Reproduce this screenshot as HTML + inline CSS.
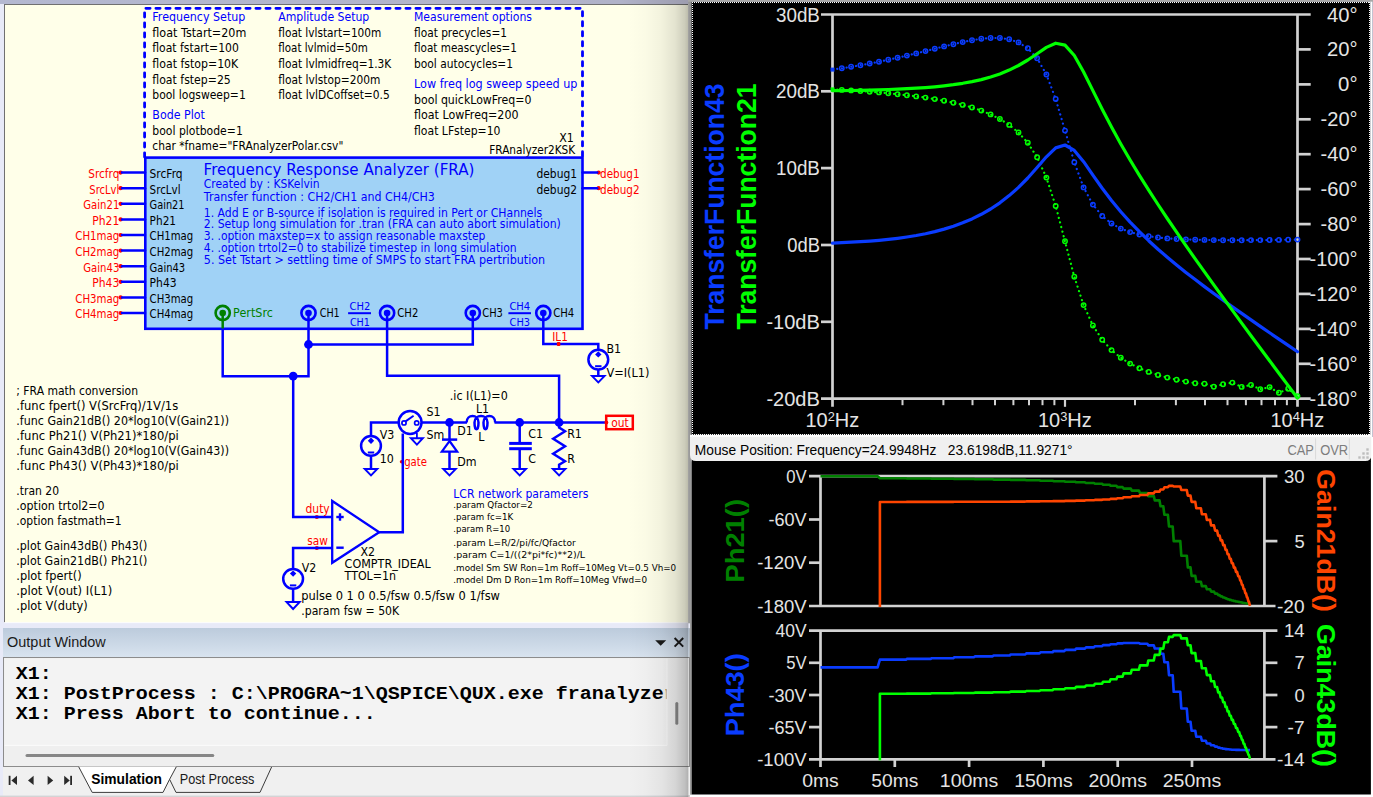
<!DOCTYPE html>
<html lang="en"><head><meta charset="utf-8"><title>QSPICE - Frequency Response Analyzer</title>
<style>
html,body{margin:0;padding:0;background:#e8eaf8;overflow:hidden}
svg{display:block}
text{white-space:pre}
</style></head><body>
<svg width="1373" height="797" viewBox="0 0 1373 797">
<defs>
<linearGradient id="hdr" x1="0" y1="0" x2="0" y2="1"><stop offset="0" stop-color="#bccbdc"/><stop offset="1" stop-color="#d8e3ef"/></linearGradient>
<linearGradient id="shadow" x1="0" y1="0" x2="1" y2="0">
<stop offset="0" stop-color="#000" stop-opacity="0"/>
<stop offset="0.3" stop-color="#000" stop-opacity="0.018"/>
<stop offset="0.55" stop-color="#000" stop-opacity="0.05"/>
<stop offset="0.78" stop-color="#000" stop-opacity="0.11"/>
<stop offset="0.94" stop-color="#000" stop-opacity="0.2"/>
<stop offset="1" stop-color="#000" stop-opacity="0.27"/></linearGradient>
<linearGradient id="topbar" x1="0" y1="0" x2="1" y2="0"><stop offset="0" stop-color="#b4b8d0"/><stop offset="0.9" stop-color="#b0b2c8"/><stop offset="1" stop-color="#9c9cae"/></linearGradient>
</defs>
<rect x="0.0" y="0.0" width="1373.0" height="797.0" fill="#e8eaf8" />
<rect x="0.0" y="0.0" width="690.0" height="4.0" fill="url(#topbar)" />
<rect x="4.0" y="4.0" width="684.5" height="618.5" fill="#ffffe9" />
<line x1="4.5" y1="4.0" x2="4.5" y2="622.5" stroke="#707070" stroke-width="1" />
<line x1="4.0" y1="4.5" x2="688.0" y2="4.5" stroke="#707070" stroke-width="1" />
<rect x="4.0" y="622.3" width="685.0" height="1.0" fill="#ffffff" />
<path d="M144.6 157 V8.3 H582.5 V157" stroke="#0000ff" stroke-width="2.8" fill="none" stroke-dasharray="4.2 5.8" stroke-linecap="round"/>
<text x="152.3" y="21.0" font-size="11.7" fill="#0000ff" font-family="'DejaVu Sans','Liberation Sans',sans-serif" textLength="93.0" lengthAdjust="spacingAndGlyphs">Frequency Setup</text>
<text x="152.3" y="37.0" font-size="11.7" fill="#000" font-family="'DejaVu Sans','Liberation Sans',sans-serif" textLength="94.0" lengthAdjust="spacingAndGlyphs">float Tstart=20m</text>
<text x="152.3" y="52.4" font-size="11.7" fill="#000" font-family="'DejaVu Sans','Liberation Sans',sans-serif" textLength="86.5" lengthAdjust="spacingAndGlyphs">float fstart=100</text>
<text x="152.3" y="68.3" font-size="11.7" fill="#000" font-family="'DejaVu Sans','Liberation Sans',sans-serif" textLength="86.0" lengthAdjust="spacingAndGlyphs">float fstop=10K</text>
<text x="152.3" y="84.0" font-size="11.7" fill="#000" font-family="'DejaVu Sans','Liberation Sans',sans-serif" textLength="78.5" lengthAdjust="spacingAndGlyphs">float fstep=25</text>
<text x="152.3" y="99.3" font-size="11.7" fill="#000" font-family="'DejaVu Sans','Liberation Sans',sans-serif" textLength="93.5" lengthAdjust="spacingAndGlyphs">bool logsweep=1</text>
<text x="152.3" y="119.0" font-size="11.7" fill="#0000ff" font-family="'DejaVu Sans','Liberation Sans',sans-serif" textLength="52.5" lengthAdjust="spacingAndGlyphs">Bode Plot</text>
<text x="152.3" y="135.1" font-size="11.7" fill="#000" font-family="'DejaVu Sans','Liberation Sans',sans-serif" textLength="90.5" lengthAdjust="spacingAndGlyphs">bool plotbode=1</text>
<text x="152.3" y="150.3" font-size="11.7" fill="#000" font-family="'DejaVu Sans','Liberation Sans',sans-serif" textLength="191.0" lengthAdjust="spacingAndGlyphs">char *fname="FRAnalyzerPolar.csv"</text>
<text x="278.3" y="21.0" font-size="11.7" fill="#0000ff" font-family="'DejaVu Sans','Liberation Sans',sans-serif" textLength="91.0" lengthAdjust="spacingAndGlyphs">Amplitude Setup</text>
<text x="278.3" y="37.0" font-size="11.7" fill="#000" font-family="'DejaVu Sans','Liberation Sans',sans-serif" textLength="103.0" lengthAdjust="spacingAndGlyphs">float lvlstart=100m</text>
<text x="278.3" y="52.4" font-size="11.7" fill="#000" font-family="'DejaVu Sans','Liberation Sans',sans-serif" textLength="89.5" lengthAdjust="spacingAndGlyphs">float lvlmid=50m</text>
<text x="278.3" y="68.3" font-size="11.7" fill="#000" font-family="'DejaVu Sans','Liberation Sans',sans-serif" textLength="113.0" lengthAdjust="spacingAndGlyphs">float lvlmidfreq=1.3K</text>
<text x="278.3" y="84.0" font-size="11.7" fill="#000" font-family="'DejaVu Sans','Liberation Sans',sans-serif" textLength="102.0" lengthAdjust="spacingAndGlyphs">float lvlstop=200m</text>
<text x="278.3" y="99.3" font-size="11.7" fill="#000" font-family="'DejaVu Sans','Liberation Sans',sans-serif" textLength="111.5" lengthAdjust="spacingAndGlyphs">float lvlDCoffset=0.5</text>
<text x="414.0" y="21.0" font-size="11.7" fill="#0000ff" font-family="'DejaVu Sans','Liberation Sans',sans-serif" textLength="118.0" lengthAdjust="spacingAndGlyphs">Measurement options</text>
<text x="414.0" y="37.0" font-size="11.7" fill="#000" font-family="'DejaVu Sans','Liberation Sans',sans-serif" textLength="93.0" lengthAdjust="spacingAndGlyphs">float precycles=1</text>
<text x="414.0" y="52.4" font-size="11.7" fill="#000" font-family="'DejaVu Sans','Liberation Sans',sans-serif" textLength="103.0" lengthAdjust="spacingAndGlyphs">float meascycles=1</text>
<text x="414.0" y="68.3" font-size="11.7" fill="#000" font-family="'DejaVu Sans','Liberation Sans',sans-serif" textLength="99.0" lengthAdjust="spacingAndGlyphs">bool autocycles=1</text>
<text x="414.0" y="88.0" font-size="11.7" fill="#0000ff" font-family="'DejaVu Sans','Liberation Sans',sans-serif" textLength="163.5" lengthAdjust="spacingAndGlyphs">Low freq log sweep speed up</text>
<text x="414.0" y="103.6" font-size="11.7" fill="#000" font-family="'DejaVu Sans','Liberation Sans',sans-serif" textLength="117.5" lengthAdjust="spacingAndGlyphs">bool quickLowFreq=0</text>
<text x="414.0" y="119.0" font-size="11.7" fill="#000" font-family="'DejaVu Sans','Liberation Sans',sans-serif" textLength="104.5" lengthAdjust="spacingAndGlyphs">float LowFreq=200</text>
<text x="414.0" y="135.1" font-size="11.7" fill="#000" font-family="'DejaVu Sans','Liberation Sans',sans-serif" textLength="86.5" lengthAdjust="spacingAndGlyphs">float LFstep=10</text>
<text x="573.8" y="142.4" font-size="11.7" fill="#000" font-family="'DejaVu Sans','Liberation Sans',sans-serif" text-anchor="end" textLength="14.6" lengthAdjust="spacingAndGlyphs">X1</text>
<text x="575.2" y="153.6" font-size="11.7" fill="#000" font-family="'DejaVu Sans','Liberation Sans',sans-serif" text-anchor="end" textLength="86.0" lengthAdjust="spacingAndGlyphs">FRAnalyzer2KSK</text>
<rect x="145.3" y="157.6" width="437.2" height="171.2" fill="#a0d2f6" stroke="#0000ff" stroke-width="2.6"/>
<circle cx="120.6" cy="172.6" r="2.1" fill="#ff0000" stroke="none" stroke-width="0"/>
<line x1="122.0" y1="172.6" x2="145.0" y2="172.6" stroke="#0000ff" stroke-width="2.5" stroke-linecap="round"/>
<text x="119.3" y="177.9" font-size="11.7" fill="#ff0000" font-family="'DejaVu Sans','Liberation Sans',sans-serif" text-anchor="end" textLength="31.0" lengthAdjust="spacingAndGlyphs">Srcfrq</text>
<text x="149.6" y="177.9" font-size="11.7" fill="#000" font-family="'DejaVu Sans','Liberation Sans',sans-serif" textLength="33.0" lengthAdjust="spacingAndGlyphs">SrcFrq</text>
<circle cx="120.6" cy="188.2" r="2.1" fill="#ff0000" stroke="none" stroke-width="0"/>
<line x1="122.0" y1="188.2" x2="145.0" y2="188.2" stroke="#0000ff" stroke-width="2.5" stroke-linecap="round"/>
<text x="119.3" y="193.5" font-size="11.7" fill="#ff0000" font-family="'DejaVu Sans','Liberation Sans',sans-serif" text-anchor="end" textLength="30.0" lengthAdjust="spacingAndGlyphs">SrcLvl</text>
<text x="149.6" y="193.5" font-size="11.7" fill="#000" font-family="'DejaVu Sans','Liberation Sans',sans-serif" textLength="31.0" lengthAdjust="spacingAndGlyphs">SrcLvl</text>
<circle cx="120.6" cy="203.8" r="2.1" fill="#ff0000" stroke="none" stroke-width="0"/>
<line x1="122.0" y1="203.8" x2="145.0" y2="203.8" stroke="#0000ff" stroke-width="2.5" stroke-linecap="round"/>
<text x="119.3" y="209.1" font-size="11.7" fill="#ff0000" font-family="'DejaVu Sans','Liberation Sans',sans-serif" text-anchor="end" textLength="36.0" lengthAdjust="spacingAndGlyphs">Gain21</text>
<text x="149.6" y="209.1" font-size="11.7" fill="#000" font-family="'DejaVu Sans','Liberation Sans',sans-serif" textLength="35.0" lengthAdjust="spacingAndGlyphs">Gain21</text>
<circle cx="120.6" cy="219.4" r="2.1" fill="#ff0000" stroke="none" stroke-width="0"/>
<line x1="122.0" y1="219.4" x2="145.0" y2="219.4" stroke="#0000ff" stroke-width="2.5" stroke-linecap="round"/>
<text x="119.3" y="224.7" font-size="11.7" fill="#ff0000" font-family="'DejaVu Sans','Liberation Sans',sans-serif" text-anchor="end" textLength="27.0" lengthAdjust="spacingAndGlyphs">Ph21</text>
<text x="149.6" y="224.7" font-size="11.7" fill="#000" font-family="'DejaVu Sans','Liberation Sans',sans-serif" textLength="26.5" lengthAdjust="spacingAndGlyphs">Ph21</text>
<circle cx="120.6" cy="235.0" r="2.1" fill="#ff0000" stroke="none" stroke-width="0"/>
<line x1="122.0" y1="235.0" x2="145.0" y2="235.0" stroke="#0000ff" stroke-width="2.5" stroke-linecap="round"/>
<text x="119.3" y="240.3" font-size="11.7" fill="#ff0000" font-family="'DejaVu Sans','Liberation Sans',sans-serif" text-anchor="end" textLength="44.0" lengthAdjust="spacingAndGlyphs">CH1mag</text>
<text x="149.6" y="240.3" font-size="11.7" fill="#000" font-family="'DejaVu Sans','Liberation Sans',sans-serif" textLength="43.6" lengthAdjust="spacingAndGlyphs">CH1mag</text>
<circle cx="120.6" cy="250.6" r="2.1" fill="#ff0000" stroke="none" stroke-width="0"/>
<line x1="122.0" y1="250.6" x2="145.0" y2="250.6" stroke="#0000ff" stroke-width="2.5" stroke-linecap="round"/>
<text x="119.3" y="255.9" font-size="11.7" fill="#ff0000" font-family="'DejaVu Sans','Liberation Sans',sans-serif" text-anchor="end" textLength="44.0" lengthAdjust="spacingAndGlyphs">CH2mag</text>
<text x="149.6" y="255.9" font-size="11.7" fill="#000" font-family="'DejaVu Sans','Liberation Sans',sans-serif" textLength="43.6" lengthAdjust="spacingAndGlyphs">CH2mag</text>
<circle cx="120.6" cy="266.2" r="2.1" fill="#ff0000" stroke="none" stroke-width="0"/>
<line x1="122.0" y1="266.2" x2="145.0" y2="266.2" stroke="#0000ff" stroke-width="2.5" stroke-linecap="round"/>
<text x="119.3" y="271.5" font-size="11.7" fill="#ff0000" font-family="'DejaVu Sans','Liberation Sans',sans-serif" text-anchor="end" textLength="36.0" lengthAdjust="spacingAndGlyphs">Gain43</text>
<text x="149.6" y="271.5" font-size="11.7" fill="#000" font-family="'DejaVu Sans','Liberation Sans',sans-serif" textLength="35.5" lengthAdjust="spacingAndGlyphs">Gain43</text>
<circle cx="120.6" cy="281.8" r="2.1" fill="#ff0000" stroke="none" stroke-width="0"/>
<line x1="122.0" y1="281.8" x2="145.0" y2="281.8" stroke="#0000ff" stroke-width="2.5" stroke-linecap="round"/>
<text x="119.3" y="287.1" font-size="11.7" fill="#ff0000" font-family="'DejaVu Sans','Liberation Sans',sans-serif" text-anchor="end" textLength="27.0" lengthAdjust="spacingAndGlyphs">Ph43</text>
<text x="149.6" y="287.1" font-size="11.7" fill="#000" font-family="'DejaVu Sans','Liberation Sans',sans-serif" textLength="27.0" lengthAdjust="spacingAndGlyphs">Ph43</text>
<circle cx="120.6" cy="297.4" r="2.1" fill="#ff0000" stroke="none" stroke-width="0"/>
<line x1="122.0" y1="297.4" x2="145.0" y2="297.4" stroke="#0000ff" stroke-width="2.5" stroke-linecap="round"/>
<text x="119.3" y="302.7" font-size="11.7" fill="#ff0000" font-family="'DejaVu Sans','Liberation Sans',sans-serif" text-anchor="end" textLength="44.0" lengthAdjust="spacingAndGlyphs">CH3mag</text>
<text x="149.6" y="302.7" font-size="11.7" fill="#000" font-family="'DejaVu Sans','Liberation Sans',sans-serif" textLength="43.6" lengthAdjust="spacingAndGlyphs">CH3mag</text>
<circle cx="120.6" cy="313.0" r="2.1" fill="#ff0000" stroke="none" stroke-width="0"/>
<line x1="122.0" y1="313.0" x2="145.0" y2="313.0" stroke="#0000ff" stroke-width="2.5" stroke-linecap="round"/>
<text x="119.3" y="318.3" font-size="11.7" fill="#ff0000" font-family="'DejaVu Sans','Liberation Sans',sans-serif" text-anchor="end" textLength="44.0" lengthAdjust="spacingAndGlyphs">CH4mag</text>
<text x="149.6" y="318.3" font-size="11.7" fill="#000" font-family="'DejaVu Sans','Liberation Sans',sans-serif" textLength="43.6" lengthAdjust="spacingAndGlyphs">CH4mag</text>
<circle cx="598.6" cy="172.6" r="2.1" fill="#ff0000" stroke="none" stroke-width="0"/>
<line x1="582.5" y1="172.6" x2="597.2" y2="172.6" stroke="#0000ff" stroke-width="2.5" stroke-linecap="round"/>
<text x="577.0" y="178.1" font-size="11.7" fill="#000" font-family="'DejaVu Sans','Liberation Sans',sans-serif" text-anchor="end" textLength="40.5" lengthAdjust="spacingAndGlyphs">debug1</text>
<text x="600.0" y="178.1" font-size="11.7" fill="#ff0000" font-family="'DejaVu Sans','Liberation Sans',sans-serif" textLength="39.6" lengthAdjust="spacingAndGlyphs">debug1</text>
<circle cx="598.6" cy="188.2" r="2.1" fill="#ff0000" stroke="none" stroke-width="0"/>
<line x1="582.5" y1="188.2" x2="597.2" y2="188.2" stroke="#0000ff" stroke-width="2.5" stroke-linecap="round"/>
<text x="577.0" y="193.7" font-size="11.7" fill="#000" font-family="'DejaVu Sans','Liberation Sans',sans-serif" text-anchor="end" textLength="40.5" lengthAdjust="spacingAndGlyphs">debug2</text>
<text x="600.0" y="193.7" font-size="11.7" fill="#ff0000" font-family="'DejaVu Sans','Liberation Sans',sans-serif" textLength="39.6" lengthAdjust="spacingAndGlyphs">debug2</text>
<text x="203.6" y="175.3" font-size="15.2" fill="#0000ff" font-family="'DejaVu Sans','Liberation Sans',sans-serif" textLength="270.8" lengthAdjust="spacingAndGlyphs">Frequency Response Analyzer (FRA)</text>
<text x="203.8" y="188.4" font-size="11.8" fill="#0000ff" font-family="'DejaVu Sans','Liberation Sans',sans-serif" textLength="115.8" lengthAdjust="spacingAndGlyphs">Created by : KSKelvin</text>
<text x="203.8" y="200.8" font-size="11.8" fill="#0000ff" font-family="'DejaVu Sans','Liberation Sans',sans-serif" textLength="230.9" lengthAdjust="spacingAndGlyphs">Transfer function : CH2/CH1 and CH4/CH3</text>
<text x="203.8" y="216.6" font-size="11.8" fill="#0000ff" font-family="'DejaVu Sans','Liberation Sans',sans-serif" textLength="338.4" lengthAdjust="spacingAndGlyphs">1. Add E or B-source if isolation is required in Pert or CHannels</text>
<text x="203.8" y="227.9" font-size="11.8" fill="#0000ff" font-family="'DejaVu Sans','Liberation Sans',sans-serif" textLength="357.0" lengthAdjust="spacingAndGlyphs">2. Setup long simulation for .tran (FRA can auto abort simulation)</text>
<text x="203.8" y="239.8" font-size="11.8" fill="#0000ff" font-family="'DejaVu Sans','Liberation Sans',sans-serif" textLength="281.6" lengthAdjust="spacingAndGlyphs">3. .option maxstep=x to assign reasonable maxstep</text>
<text x="203.8" y="251.6" font-size="11.8" fill="#0000ff" font-family="'DejaVu Sans','Liberation Sans',sans-serif" textLength="312.8" lengthAdjust="spacingAndGlyphs">4. .option trtol2=0 to stabilize timestep in long simulation</text>
<text x="203.8" y="263.5" font-size="11.8" fill="#0000ff" font-family="'DejaVu Sans','Liberation Sans',sans-serif" textLength="341.4" lengthAdjust="spacingAndGlyphs">5. Set Tstart &gt; settling time of SMPS to start FRA pertribution</text>
<circle cx="558.6" cy="344.0" r="2.1" fill="#ff0000" stroke="none" stroke-width="0"/>
<circle cx="316.8" cy="517.0" r="2.1" fill="#ff0000" stroke="none" stroke-width="0"/>
<circle cx="316.8" cy="548.0" r="2.1" fill="#ff0000" stroke="none" stroke-width="0"/>
<line x1="222.7" y1="313.0" x2="222.7" y2="328.8" stroke="#008000" stroke-width="2.5" />
<path d="M222.7 328.5 V376.2 H308.5 V313" stroke="#0000ff" stroke-width="2.5" fill="none" />
<path d="M308.5 344.5 H472.8 V313" stroke="#0000ff" stroke-width="2.5" fill="none" />
<path d="M387.1 313 V375.8 H559.1 V422" stroke="#0000ff" stroke-width="2.5" fill="none" />
<path d="M543.3 313 V344 H598.3 V349.5" stroke="#0000ff" stroke-width="2.5" fill="none" />
<path d="M293.2 376.2 V517 H332.2" stroke="#0000ff" stroke-width="2.5" fill="none" />
<circle cx="308.5" cy="344.5" r="4.4" fill="#0000ff" stroke="none" stroke-width="0"/>
<circle cx="293.2" cy="376.2" r="4.4" fill="#0000ff" stroke="none" stroke-width="0"/>
<circle cx="222.7" cy="313" r="7.1" fill="none" stroke="#008000" stroke-width="2.6"/>
<circle cx="222.7" cy="313.0" r="3.3" fill="#008000" stroke="none" stroke-width="0"/>
<circle cx="308.5" cy="313" r="7.1" fill="none" stroke="#0000ff" stroke-width="2.6"/>
<circle cx="308.5" cy="313.0" r="3.3" fill="#0000ff" stroke="none" stroke-width="0"/>
<circle cx="387.1" cy="313" r="7.1" fill="none" stroke="#0000ff" stroke-width="2.6"/>
<circle cx="387.1" cy="313.0" r="3.3" fill="#0000ff" stroke="none" stroke-width="0"/>
<circle cx="472.8" cy="313" r="7.1" fill="none" stroke="#0000ff" stroke-width="2.6"/>
<circle cx="472.8" cy="313.0" r="3.3" fill="#0000ff" stroke="none" stroke-width="0"/>
<circle cx="543.3" cy="313" r="7.1" fill="none" stroke="#0000ff" stroke-width="2.6"/>
<circle cx="543.3" cy="313.0" r="3.3" fill="#0000ff" stroke="none" stroke-width="0"/>
<text x="233.1" y="317.2" font-size="11.7" fill="#008000" font-family="'DejaVu Sans','Liberation Sans',sans-serif" textLength="39.8" lengthAdjust="spacingAndGlyphs">PertSrc</text>
<text x="319.7" y="317.2" font-size="11.7" fill="#000" font-family="'DejaVu Sans','Liberation Sans',sans-serif" textLength="20.0" lengthAdjust="spacingAndGlyphs">CH1</text>
<text x="397.3" y="317.2" font-size="11.7" fill="#000" font-family="'DejaVu Sans','Liberation Sans',sans-serif" textLength="21.0" lengthAdjust="spacingAndGlyphs">CH2</text>
<text x="482.3" y="317.2" font-size="11.7" fill="#000" font-family="'DejaVu Sans','Liberation Sans',sans-serif" textLength="20.6" lengthAdjust="spacingAndGlyphs">CH3</text>
<text x="553.2" y="317.2" font-size="11.7" fill="#000" font-family="'DejaVu Sans','Liberation Sans',sans-serif" textLength="21.0" lengthAdjust="spacingAndGlyphs">CH4</text>
<text x="359.9" y="309.6" font-size="10.6" fill="#0000ff" font-family="'DejaVu Sans','Liberation Sans',sans-serif" text-anchor="middle" textLength="20.8" lengthAdjust="spacingAndGlyphs">CH2</text>
<line x1="348.1" y1="313.2" x2="371.0" y2="313.2" stroke="#0000ff" stroke-width="2" />
<text x="359.9" y="325.7" font-size="10.6" fill="#0000ff" font-family="'DejaVu Sans','Liberation Sans',sans-serif" text-anchor="middle" textLength="20.0" lengthAdjust="spacingAndGlyphs">CH1</text>
<text x="519.8" y="309.6" font-size="10.6" fill="#0000ff" font-family="'DejaVu Sans','Liberation Sans',sans-serif" text-anchor="middle" textLength="20.8" lengthAdjust="spacingAndGlyphs">CH4</text>
<line x1="508.4" y1="313.2" x2="531.0" y2="313.2" stroke="#0000ff" stroke-width="2" />
<text x="519.8" y="325.7" font-size="10.6" fill="#0000ff" font-family="'DejaVu Sans','Liberation Sans',sans-serif" text-anchor="middle" textLength="20.5" lengthAdjust="spacingAndGlyphs">CH3</text>
<text x="552.3" y="341.0" font-size="11.7" fill="#ff0000" font-family="'DejaVu Sans','Liberation Sans',sans-serif" textLength="15.5" lengthAdjust="spacingAndGlyphs">IL1</text>
<circle cx="558.6" cy="344.0" r="1.9" fill="#ff0000" stroke="none" stroke-width="0"/>
<circle cx="598.3" cy="359.6" r="9.9" fill="none" stroke="#0000ff" stroke-width="2.5"/>
<path d="M598.3 351.2 L601.5 354.4 L598.3 357.6 L595.0999999999999 354.4 Z" fill="#0000ff"/>
<line x1="595.1" y1="366.2" x2="601.5" y2="366.2" stroke="#0000ff" stroke-width="2" />
<line x1="598.3" y1="370.0" x2="598.3" y2="376.0" stroke="#0000ff" stroke-width="2.5" />
<path d="M592.0 376.0 H604.6 L598.3 382.5 Z" stroke="#0000ff" stroke-width="1.9" fill="none" stroke-linejoin="miter"/>
<text x="606.4" y="352.6" font-size="11.7" fill="#000" font-family="'DejaVu Sans','Liberation Sans',sans-serif" textLength="14.7" lengthAdjust="spacingAndGlyphs">B1</text>
<text x="606.4" y="376.6" font-size="11.7" fill="#000" font-family="'DejaVu Sans','Liberation Sans',sans-serif" textLength="43.0" lengthAdjust="spacingAndGlyphs">V=I(L1)</text>
<path d="M371 435.5 V422.5 H398" stroke="#0000ff" stroke-width="2.5" fill="none" />
<line x1="422.0" y1="422.5" x2="467.0" y2="422.5" stroke="#0000ff" stroke-width="2.5" />
<line x1="494.5" y1="422.5" x2="605.5" y2="422.5" stroke="#0000ff" stroke-width="2.5" />
<circle cx="371" cy="445.9" r="9.9" fill="none" stroke="#0000ff" stroke-width="2.5"/>
<path d="M371 437.5 L374.2 440.7 L371 443.9 L367.8 440.7 Z" fill="#0000ff"/>
<line x1="367.8" y1="452.5" x2="374.2" y2="452.5" stroke="#0000ff" stroke-width="2" />
<line x1="371.0" y1="456.3" x2="371.0" y2="469.0" stroke="#0000ff" stroke-width="2.5" />
<path d="M364.7 469.0 H377.3 L371.0 475.5 Z" stroke="#0000ff" stroke-width="1.9" fill="none" stroke-linejoin="miter"/>
<text x="379.8" y="438.9" font-size="11.7" fill="#000" font-family="'DejaVu Sans','Liberation Sans',sans-serif" textLength="14.6" lengthAdjust="spacingAndGlyphs">V3</text>
<text x="379.8" y="462.7" font-size="11.7" fill="#000" font-family="'DejaVu Sans','Liberation Sans',sans-serif" textLength="14.1" lengthAdjust="spacingAndGlyphs">10</text>
<circle cx="410.1" cy="422.5" r="11.4" fill="none" stroke="#0000ff" stroke-width="2.5"/>
<circle cx="404" cy="422.9" r="2.1" fill="none" stroke="#0000ff" stroke-width="1.7"/>
<circle cx="416.7" cy="422.9" r="2.1" fill="none" stroke="#0000ff" stroke-width="1.7"/>
<line x1="405.2" y1="421.6" x2="413.6" y2="415.8" stroke="#0000ff" stroke-width="2" />
<text x="426.5" y="415.6" font-size="11.7" fill="#000" font-family="'DejaVu Sans','Liberation Sans',sans-serif" textLength="14.1" lengthAdjust="spacingAndGlyphs">S1</text>
<text x="426.5" y="438.9" font-size="11.7" fill="#000" font-family="'DejaVu Sans','Liberation Sans',sans-serif" textLength="17.8" lengthAdjust="spacingAndGlyphs">Sm</text>
<circle cx="401.6" cy="461.7" r="1.8" fill="#ff0000" stroke="none" stroke-width="0"/>
<path d="M402.8 433.5 V532.2 H379.2" stroke="#0000ff" stroke-width="2.5" fill="none" />
<line x1="416.9" y1="433.0" x2="416.9" y2="438.4" stroke="#0000ff" stroke-width="1.8" />
<path d="M410.9 438.2 H422.9 L416.9 444.6 Z" stroke="#0000ff" stroke-width="1.9" fill="none" stroke-linejoin="miter"/>
<text x="404.2" y="466.4" font-size="11.7" fill="#ff0000" font-family="'DejaVu Sans','Liberation Sans',sans-serif" textLength="22.8" lengthAdjust="spacingAndGlyphs">gate</text>
<circle cx="449.5" cy="422.5" r="4.4" fill="#0000ff" stroke="none" stroke-width="0"/>
<line x1="449.5" y1="422.5" x2="449.5" y2="439.6" stroke="#0000ff" stroke-width="2.5" />
<line x1="442.0" y1="439.6" x2="457.2" y2="439.6" stroke="#0000ff" stroke-width="2.5" />
<path d="M449.5 441 L457.2 451.6 H441.8 Z" stroke="#0000ff" stroke-width="2.2" fill="none" stroke-linejoin="miter"/>
<line x1="449.5" y1="451.7" x2="449.5" y2="469.0" stroke="#0000ff" stroke-width="2.5" />
<path d="M443.2 469.0 H455.8 L449.5 475.5 Z" stroke="#0000ff" stroke-width="1.9" fill="none" stroke-linejoin="miter"/>
<text x="457.2" y="435.0" font-size="11.7" fill="#000" font-family="'DejaVu Sans','Liberation Sans',sans-serif" textLength="15.6" lengthAdjust="spacingAndGlyphs">D1</text>
<text x="457.2" y="466.4" font-size="11.7" fill="#000" font-family="'DejaVu Sans','Liberation Sans',sans-serif" textLength="19.3" lengthAdjust="spacingAndGlyphs">Dm</text>
<path d="M466.6 422.5 C466.6 413.8 478.5 413.8 478.5 422.5 C478.5 431.6 474.5 431.6 474.5 422.5 C474.5 413.8 487.5 413.8 487.5 422.5 C487.5 431.6 483.5 431.6 483.5 422.5 C483.5 413.8 495.2 413.8 495.2 422.5" stroke="#0000ff" stroke-width="2.5" fill="none" />
<text x="475.9" y="412.8" font-size="11.7" fill="#000" font-family="'DejaVu Sans','Liberation Sans',sans-serif" textLength="13.2" lengthAdjust="spacingAndGlyphs">L1</text>
<text x="478.2" y="440.5" font-size="11.7" fill="#000" font-family="'DejaVu Sans','Liberation Sans',sans-serif" textLength="6.2" lengthAdjust="spacingAndGlyphs">L</text>
<text x="449.8" y="400.0" font-size="11.7" fill="#000" font-family="'DejaVu Sans','Liberation Sans',sans-serif" textLength="58.0" lengthAdjust="spacingAndGlyphs">.ic I(L1)=0</text>
<circle cx="519.7" cy="422.5" r="4.4" fill="#0000ff" stroke="none" stroke-width="0"/>
<line x1="519.7" y1="422.5" x2="519.7" y2="443.5" stroke="#0000ff" stroke-width="2.5" />
<line x1="509.2" y1="443.4" x2="531.8" y2="443.4" stroke="#0000ff" stroke-width="3" />
<line x1="509.2" y1="448.7" x2="531.8" y2="448.7" stroke="#0000ff" stroke-width="3" />
<line x1="519.7" y1="448.8" x2="519.7" y2="469.0" stroke="#0000ff" stroke-width="2.5" />
<path d="M513.4 469.0 H526.0 L519.7 475.5 Z" stroke="#0000ff" stroke-width="1.9" fill="none" stroke-linejoin="miter"/>
<text x="528.3" y="438.4" font-size="11.7" fill="#000" font-family="'DejaVu Sans','Liberation Sans',sans-serif" textLength="14.8" lengthAdjust="spacingAndGlyphs">C1</text>
<text x="528.3" y="462.7" font-size="11.7" fill="#000" font-family="'DejaVu Sans','Liberation Sans',sans-serif" textLength="7.7" lengthAdjust="spacingAndGlyphs">C</text>
<circle cx="559.1" cy="422.5" r="4.4" fill="#0000ff" stroke="none" stroke-width="0"/>
<path d="M559.1 422.5 V427.5 L565 431.2 L553.2 438.7 L565 446.2 L553.2 453.7 L565 461.2 L559.1 464.8 V469" stroke="#0000ff" stroke-width="2.5" fill="none" stroke-linejoin="miter"/>
<path d="M552.8 469.0 H565.4 L559.1 475.5 Z" stroke="#0000ff" stroke-width="1.9" fill="none" stroke-linejoin="miter"/>
<text x="567.2" y="438.4" font-size="11.7" fill="#000" font-family="'DejaVu Sans','Liberation Sans',sans-serif" textLength="14.7" lengthAdjust="spacingAndGlyphs">R1</text>
<text x="567.2" y="462.7" font-size="11.7" fill="#000" font-family="'DejaVu Sans','Liberation Sans',sans-serif" textLength="7.7" lengthAdjust="spacingAndGlyphs">R</text>
<rect x="606.2" y="415.8" width="26.6" height="13.4" fill="#fffff0" stroke="#ff0000" stroke-width="2.5"/>
<circle cx="606.4" cy="422.5" r="1.9" fill="#ff0000" stroke="none" stroke-width="0"/>
<text x="611.2" y="427.2" font-size="11.7" fill="#ff0000" font-family="'DejaVu Sans','Liberation Sans',sans-serif" textLength="17.5" lengthAdjust="spacingAndGlyphs">out</text>
<path d="M332.2 501 V562.8 L379.2 532.2 Z" stroke="#0000ff" stroke-width="2.3" fill="none" stroke-linejoin="miter"/>
<line x1="336.3" y1="517.0" x2="343.7" y2="517.0" stroke="#0000ff" stroke-width="2.4" />
<line x1="340.0" y1="513.3" x2="340.0" y2="520.7" stroke="#0000ff" stroke-width="2.4" />
<line x1="336.3" y1="547.7" x2="343.7" y2="547.7" stroke="#0000ff" stroke-width="2.4" />
<path d="M332.2 548 H293.1 V568.4" stroke="#0000ff" stroke-width="2.5" fill="none" />
<circle cx="293.1" cy="578.8" r="9.9" fill="none" stroke="#0000ff" stroke-width="2.5"/>
<path d="M293.1 570.4 L296.3 573.6 L293.1 576.8 L289.90000000000003 573.6 Z" fill="#0000ff"/>
<line x1="289.9" y1="585.4" x2="296.3" y2="585.4" stroke="#0000ff" stroke-width="2" />
<line x1="293.1" y1="589.2" x2="293.1" y2="602.0" stroke="#0000ff" stroke-width="2.5" />
<path d="M286.5 602.0 H299.7 L293.1 609.0 Z" stroke="#0000ff" stroke-width="1.9" fill="none" stroke-linejoin="miter"/>
<text x="305.5" y="512.8" font-size="11.7" fill="#ff0000" font-family="'DejaVu Sans','Liberation Sans',sans-serif" textLength="24.2" lengthAdjust="spacingAndGlyphs">duty</text>
<text x="307.3" y="544.6" font-size="11.7" fill="#ff0000" font-family="'DejaVu Sans','Liberation Sans',sans-serif" textLength="20.6" lengthAdjust="spacingAndGlyphs">saw</text>
<text x="301.8" y="571.5" font-size="11.7" fill="#000" font-family="'DejaVu Sans','Liberation Sans',sans-serif" textLength="14.6" lengthAdjust="spacingAndGlyphs">V2</text>
<text x="360.4" y="556.4" font-size="11.7" fill="#000" font-family="'DejaVu Sans','Liberation Sans',sans-serif" textLength="14.6" lengthAdjust="spacingAndGlyphs">X2</text>
<text x="344.6" y="567.9" font-size="11.7" fill="#000" font-family="'DejaVu Sans','Liberation Sans',sans-serif" textLength="86.1" lengthAdjust="spacingAndGlyphs">COMPTR_IDEAL</text>
<text x="344.6" y="579.7" font-size="11.7" fill="#000" font-family="'DejaVu Sans','Liberation Sans',sans-serif" textLength="51.5" lengthAdjust="spacingAndGlyphs">TTOL=1n</text>
<text x="301.3" y="599.7" font-size="11.7" fill="#000" font-family="'DejaVu Sans','Liberation Sans',sans-serif" textLength="198.7" lengthAdjust="spacingAndGlyphs">pulse 0 1 0 0.5/fsw 0.5/fsw 0 1/fsw</text>
<text x="301.3" y="614.7" font-size="11.7" fill="#000" font-family="'DejaVu Sans','Liberation Sans',sans-serif" textLength="97.9" lengthAdjust="spacingAndGlyphs">.param fsw = 50K</text>
<text x="453.3" y="497.7" font-size="11.7" fill="#0000ff" font-family="'DejaVu Sans','Liberation Sans',sans-serif" textLength="135.1" lengthAdjust="spacingAndGlyphs">LCR network parameters</text>
<text x="453.3" y="507.7" font-size="9.1" fill="#000" font-family="'DejaVu Sans','Liberation Sans',sans-serif" textLength="79.6" lengthAdjust="spacingAndGlyphs">.param Qfactor=2</text>
<text x="453.3" y="519.7" font-size="9.1" fill="#000" font-family="'DejaVu Sans','Liberation Sans',sans-serif" textLength="59.9" lengthAdjust="spacingAndGlyphs">.param fc=1K</text>
<text x="453.3" y="531.9" font-size="9.1" fill="#000" font-family="'DejaVu Sans','Liberation Sans',sans-serif" textLength="56.8" lengthAdjust="spacingAndGlyphs">.param R=10</text>
<text x="453.3" y="545.9" font-size="9.1" fill="#000" font-family="'DejaVu Sans','Liberation Sans',sans-serif" textLength="122.4" lengthAdjust="spacingAndGlyphs">.param L=R/2/pi/fc/Qfactor</text>
<text x="453.3" y="557.9" font-size="9.1" fill="#000" font-family="'DejaVu Sans','Liberation Sans',sans-serif" textLength="131.8" lengthAdjust="spacingAndGlyphs">.param C=1/((2*pi*fc)**2)/L</text>
<text x="453.3" y="570.5" font-size="9.1" fill="#000" font-family="'DejaVu Sans','Liberation Sans',sans-serif" textLength="222.9" lengthAdjust="spacingAndGlyphs">.model Sm SW Ron=1m Roff=10Meg Vt=0.5 Vh=0</text>
<text x="453.3" y="582.5" font-size="9.1" fill="#000" font-family="'DejaVu Sans','Liberation Sans',sans-serif" textLength="193.7" lengthAdjust="spacingAndGlyphs">.model Dm D Ron=1m Roff=10Meg Vfwd=0</text>
<text x="16.3" y="395.0" font-size="11.7" fill="#000" font-family="'DejaVu Sans','Liberation Sans',sans-serif" textLength="121.7" lengthAdjust="spacingAndGlyphs">; FRA math conversion</text>
<text x="16.3" y="410.0" font-size="11.7" fill="#000" font-family="'DejaVu Sans','Liberation Sans',sans-serif" textLength="161.9" lengthAdjust="spacingAndGlyphs">.func fpert() V(SrcFrq)/1V/1s</text>
<text x="16.3" y="425.0" font-size="11.7" fill="#000" font-family="'DejaVu Sans','Liberation Sans',sans-serif" textLength="212.7" lengthAdjust="spacingAndGlyphs">.func Gain21dB() 20*log10(V(Gain21))</text>
<text x="16.3" y="440.0" font-size="11.7" fill="#000" font-family="'DejaVu Sans','Liberation Sans',sans-serif" textLength="162.5" lengthAdjust="spacingAndGlyphs">.func Ph21() V(Ph21)*180/pi</text>
<text x="16.3" y="455.0" font-size="11.7" fill="#000" font-family="'DejaVu Sans','Liberation Sans',sans-serif" textLength="212.7" lengthAdjust="spacingAndGlyphs">.func Gain43dB() 20*log10(V(Gain43))</text>
<text x="16.3" y="470.0" font-size="11.7" fill="#000" font-family="'DejaVu Sans','Liberation Sans',sans-serif" textLength="162.5" lengthAdjust="spacingAndGlyphs">.func Ph43() V(Ph43)*180/pi</text>
<text x="16.3" y="495.0" font-size="11.7" fill="#000" font-family="'DejaVu Sans','Liberation Sans',sans-serif" textLength="42.7" lengthAdjust="spacingAndGlyphs">.tran 20</text>
<text x="16.3" y="510.0" font-size="11.7" fill="#000" font-family="'DejaVu Sans','Liberation Sans',sans-serif" textLength="88.2" lengthAdjust="spacingAndGlyphs">.option trtol2=0</text>
<text x="16.3" y="525.0" font-size="11.7" fill="#000" font-family="'DejaVu Sans','Liberation Sans',sans-serif" textLength="105.4" lengthAdjust="spacingAndGlyphs">.option fastmath=1</text>
<text x="16.3" y="550.0" font-size="11.7" fill="#000" font-family="'DejaVu Sans','Liberation Sans',sans-serif" textLength="131.1" lengthAdjust="spacingAndGlyphs">.plot Gain43dB() Ph43()</text>
<text x="16.3" y="565.0" font-size="11.7" fill="#000" font-family="'DejaVu Sans','Liberation Sans',sans-serif" textLength="131.1" lengthAdjust="spacingAndGlyphs">.plot Gain21dB() Ph21()</text>
<text x="16.3" y="580.0" font-size="11.7" fill="#000" font-family="'DejaVu Sans','Liberation Sans',sans-serif" textLength="65.3" lengthAdjust="spacingAndGlyphs">.plot fpert()</text>
<text x="16.3" y="595.0" font-size="11.7" fill="#000" font-family="'DejaVu Sans','Liberation Sans',sans-serif" textLength="96.0" lengthAdjust="spacingAndGlyphs">.plot V(out) I(L1)</text>
<text x="16.3" y="610.0" font-size="11.7" fill="#000" font-family="'DejaVu Sans','Liberation Sans',sans-serif" textLength="71.5" lengthAdjust="spacingAndGlyphs">.plot V(duty)</text>
<rect x="688.3" y="0.0" width="3.6" height="797.0" fill="#989898" />
<rect x="691.6" y="1.7" width="678.8" height="433.3" fill="#000" />
<g stroke="#fff" stroke-width="1" stroke-dasharray="1 1" shape-rendering="crispEdges"><path d="M692 2.5 H1370 M692 434.5 H1370 M692.5 2 V435 M1369.5 2 V435"/></g>
<rect x="1370.4" y="0.0" width="2.6" height="797.0" fill="#ffffff" />
<rect x="1372.2" y="0.0" width="0.8" height="437.0" fill="#b4b4c6" />
<rect x="688.0" y="0.0" width="685.0" height="1.7" fill="#a8a8a8" />
<line x1="821.0" y1="14.5" x2="1310.7" y2="14.5" stroke="#d2d2d2" stroke-width="2.7" />
<line x1="821.0" y1="398.6" x2="1310.7" y2="398.6" stroke="#d2d2d2" stroke-width="2.7" />
<line x1="832.5" y1="14.5" x2="832.5" y2="406.8" stroke="#d2d2d2" stroke-width="2.7" />
<line x1="1297.5" y1="14.5" x2="1297.5" y2="406.8" stroke="#d2d2d2" stroke-width="2.7" />
<text x="819.9" y="21.5" font-size="19.5" fill="#e4e4e4" font-family="'Liberation Sans','DejaVu Sans',sans-serif" text-anchor="end" textLength="43.9" lengthAdjust="spacingAndGlyphs">30dB</text>
<line x1="821.0" y1="91.3" x2="832.5" y2="91.3" stroke="#d2d2d2" stroke-width="2.7" />
<text x="819.9" y="98.3" font-size="19.5" fill="#e4e4e4" font-family="'Liberation Sans','DejaVu Sans',sans-serif" text-anchor="end" textLength="43.9" lengthAdjust="spacingAndGlyphs">20dB</text>
<line x1="821.0" y1="168.1" x2="832.5" y2="168.1" stroke="#d2d2d2" stroke-width="2.7" />
<text x="819.9" y="175.1" font-size="19.5" fill="#e4e4e4" font-family="'Liberation Sans','DejaVu Sans',sans-serif" text-anchor="end" textLength="43.9" lengthAdjust="spacingAndGlyphs">10dB</text>
<line x1="821.0" y1="245.0" x2="832.5" y2="245.0" stroke="#d2d2d2" stroke-width="2.7" />
<text x="819.9" y="252.0" font-size="19.5" fill="#e4e4e4" font-family="'Liberation Sans','DejaVu Sans',sans-serif" text-anchor="end" textLength="32.7" lengthAdjust="spacingAndGlyphs">0dB</text>
<line x1="821.0" y1="321.8" x2="832.5" y2="321.8" stroke="#d2d2d2" stroke-width="2.7" />
<text x="819.9" y="328.8" font-size="19.5" fill="#e4e4e4" font-family="'Liberation Sans','DejaVu Sans',sans-serif" text-anchor="end" textLength="53.5" lengthAdjust="spacingAndGlyphs">-10dB</text>
<text x="819.9" y="405.6" font-size="19.5" fill="#e4e4e4" font-family="'Liberation Sans','DejaVu Sans',sans-serif" text-anchor="end" textLength="53.5" lengthAdjust="spacingAndGlyphs">-20dB</text>
<text x="1357.6" y="21.5" font-size="19.5" fill="#e4e4e4" font-family="'Liberation Sans','DejaVu Sans',sans-serif" text-anchor="end" textLength="30.6" lengthAdjust="spacingAndGlyphs">40°</text>
<line x1="1297.5" y1="49.4" x2="1310.7" y2="49.4" stroke="#d2d2d2" stroke-width="2.7" />
<text x="1357.6" y="56.4" font-size="19.5" fill="#e4e4e4" font-family="'Liberation Sans','DejaVu Sans',sans-serif" text-anchor="end" textLength="30.6" lengthAdjust="spacingAndGlyphs">20°</text>
<line x1="1297.5" y1="84.4" x2="1310.7" y2="84.4" stroke="#d2d2d2" stroke-width="2.7" />
<text x="1357.6" y="91.4" font-size="19.5" fill="#e4e4e4" font-family="'Liberation Sans','DejaVu Sans',sans-serif" text-anchor="end" textLength="19.5" lengthAdjust="spacingAndGlyphs">0°</text>
<line x1="1297.5" y1="119.3" x2="1310.7" y2="119.3" stroke="#d2d2d2" stroke-width="2.7" />
<text x="1357.6" y="126.3" font-size="19.5" fill="#e4e4e4" font-family="'Liberation Sans','DejaVu Sans',sans-serif" text-anchor="end" textLength="37.0" lengthAdjust="spacingAndGlyphs">-20°</text>
<line x1="1297.5" y1="154.2" x2="1310.7" y2="154.2" stroke="#d2d2d2" stroke-width="2.7" />
<text x="1357.6" y="161.2" font-size="19.5" fill="#e4e4e4" font-family="'Liberation Sans','DejaVu Sans',sans-serif" text-anchor="end" textLength="37.0" lengthAdjust="spacingAndGlyphs">-40°</text>
<line x1="1297.5" y1="189.1" x2="1310.7" y2="189.1" stroke="#d2d2d2" stroke-width="2.7" />
<text x="1357.6" y="196.1" font-size="19.5" fill="#e4e4e4" font-family="'Liberation Sans','DejaVu Sans',sans-serif" text-anchor="end" textLength="37.0" lengthAdjust="spacingAndGlyphs">-60°</text>
<line x1="1297.5" y1="224.1" x2="1310.7" y2="224.1" stroke="#d2d2d2" stroke-width="2.7" />
<text x="1357.6" y="231.1" font-size="19.5" fill="#e4e4e4" font-family="'Liberation Sans','DejaVu Sans',sans-serif" text-anchor="end" textLength="37.0" lengthAdjust="spacingAndGlyphs">-80°</text>
<line x1="1297.5" y1="259.0" x2="1310.7" y2="259.0" stroke="#d2d2d2" stroke-width="2.7" />
<text x="1357.6" y="266.0" font-size="19.5" fill="#e4e4e4" font-family="'Liberation Sans','DejaVu Sans',sans-serif" text-anchor="end" textLength="48.0" lengthAdjust="spacingAndGlyphs">-100°</text>
<line x1="1297.5" y1="293.9" x2="1310.7" y2="293.9" stroke="#d2d2d2" stroke-width="2.7" />
<text x="1357.6" y="300.9" font-size="19.5" fill="#e4e4e4" font-family="'Liberation Sans','DejaVu Sans',sans-serif" text-anchor="end" textLength="48.0" lengthAdjust="spacingAndGlyphs">-120°</text>
<line x1="1297.5" y1="328.9" x2="1310.7" y2="328.9" stroke="#d2d2d2" stroke-width="2.7" />
<text x="1357.6" y="335.9" font-size="19.5" fill="#e4e4e4" font-family="'Liberation Sans','DejaVu Sans',sans-serif" text-anchor="end" textLength="48.0" lengthAdjust="spacingAndGlyphs">-140°</text>
<line x1="1297.5" y1="363.8" x2="1310.7" y2="363.8" stroke="#d2d2d2" stroke-width="2.7" />
<text x="1357.6" y="370.8" font-size="19.5" fill="#e4e4e4" font-family="'Liberation Sans','DejaVu Sans',sans-serif" text-anchor="end" textLength="48.0" lengthAdjust="spacingAndGlyphs">-160°</text>
<text x="1357.6" y="405.7" font-size="19.5" fill="#e4e4e4" font-family="'Liberation Sans','DejaVu Sans',sans-serif" text-anchor="end" textLength="48.0" lengthAdjust="spacingAndGlyphs">-180°</text>
<line x1="902.5" y1="398.6" x2="902.5" y2="405.2" stroke="#d2d2d2" stroke-width="2" />
<line x1="943.4" y1="398.6" x2="943.4" y2="405.2" stroke="#d2d2d2" stroke-width="2" />
<line x1="972.5" y1="398.6" x2="972.5" y2="405.2" stroke="#d2d2d2" stroke-width="2" />
<line x1="995.0" y1="398.6" x2="995.0" y2="405.2" stroke="#d2d2d2" stroke-width="2" />
<line x1="1013.4" y1="398.6" x2="1013.4" y2="405.2" stroke="#d2d2d2" stroke-width="2" />
<line x1="1029.0" y1="398.6" x2="1029.0" y2="405.2" stroke="#d2d2d2" stroke-width="2" />
<line x1="1042.5" y1="398.6" x2="1042.5" y2="405.2" stroke="#d2d2d2" stroke-width="2" />
<line x1="1054.4" y1="398.6" x2="1054.4" y2="405.2" stroke="#d2d2d2" stroke-width="2" />
<line x1="1135.0" y1="398.6" x2="1135.0" y2="405.2" stroke="#d2d2d2" stroke-width="2" />
<line x1="1175.9" y1="398.6" x2="1175.9" y2="405.2" stroke="#d2d2d2" stroke-width="2" />
<line x1="1205.0" y1="398.6" x2="1205.0" y2="405.2" stroke="#d2d2d2" stroke-width="2" />
<line x1="1227.5" y1="398.6" x2="1227.5" y2="405.2" stroke="#d2d2d2" stroke-width="2" />
<line x1="1245.9" y1="398.6" x2="1245.9" y2="405.2" stroke="#d2d2d2" stroke-width="2" />
<line x1="1261.5" y1="398.6" x2="1261.5" y2="405.2" stroke="#d2d2d2" stroke-width="2" />
<line x1="1275.0" y1="398.6" x2="1275.0" y2="405.2" stroke="#d2d2d2" stroke-width="2" />
<line x1="1286.9" y1="398.6" x2="1286.9" y2="405.2" stroke="#d2d2d2" stroke-width="2" />
<line x1="1065.0" y1="398.6" x2="1065.0" y2="406.8" stroke="#d2d2d2" stroke-width="2.2" />
<text x="805.5" y="426.8" font-size="19.5" fill="#e4e4e4" font-family="'Liberation Sans','DejaVu Sans',sans-serif" textLength="53.8" lengthAdjust="spacingAndGlyphs">10<tspan font-size="12.5" dy="-6">2</tspan><tspan dy="6">Hz</tspan></text>
<text x="1038.0" y="426.8" font-size="19.5" fill="#e4e4e4" font-family="'Liberation Sans','DejaVu Sans',sans-serif" textLength="53.8" lengthAdjust="spacingAndGlyphs">10<tspan font-size="12.5" dy="-6">3</tspan><tspan dy="6">Hz</tspan></text>
<text x="1270.5" y="426.8" font-size="19.5" fill="#e4e4e4" font-family="'Liberation Sans','DejaVu Sans',sans-serif" textLength="53.8" lengthAdjust="spacingAndGlyphs">10<tspan font-size="12.5" dy="-6">4</tspan><tspan dy="6">Hz</tspan></text>
<g fill="none" stroke-linejoin="round" stroke-linecap="round">
<path d="M832.5 69.6 L841.8 68.3 L851.1 66.8 L860.4 65.2 L869.7 63.5 L879.0 61.7 L888.3 59.8 L897.6 57.7 L906.9 55.6 L916.2 53.4 L925.5 51.1 L934.8 48.7 L944.1 46.4 L953.4 44.2 L962.7 42.1 L972.0 40.2 L981.3 38.8 L990.6 38.0 L999.9 38.0 L1009.2 39.3 L1018.5 42.4 L1027.8 48.3 L1037.1 58.3 L1046.4 74.5 L1055.7 99.0 L1065.0 130.6 L1074.3 162.3 L1083.6 187.4 L1092.9 204.6 L1102.2 216.0 L1111.5 223.5 L1120.8 228.6 L1130.1 232.1 L1139.4 234.5 L1148.7 236.2 L1158.0 237.5 L1167.3 238.4 L1176.6 239.0 L1185.9 239.4 L1195.2 239.7 L1204.5 239.9 L1213.8 240.1 L1223.1 240.2 L1232.4 240.2 L1241.7 240.2 L1251.0 240.1 L1260.3 240.1 L1269.6 240.0 L1278.9 239.9 L1288.2 239.7 L1297.5 239.6" stroke="#0a3cff" stroke-width="2.2" stroke-dasharray="0.1 4.65"/>
<circle cx="841.8" cy="68.3" r="2.2" stroke="#0a3cff" stroke-width="1.5"/>
<circle cx="851.1" cy="66.8" r="2.2" stroke="#0a3cff" stroke-width="1.5"/>
<circle cx="860.4" cy="65.2" r="2.2" stroke="#0a3cff" stroke-width="1.5"/>
<circle cx="869.7" cy="63.5" r="2.2" stroke="#0a3cff" stroke-width="1.5"/>
<circle cx="879.0" cy="61.7" r="2.2" stroke="#0a3cff" stroke-width="1.5"/>
<circle cx="888.3" cy="59.8" r="2.2" stroke="#0a3cff" stroke-width="1.5"/>
<circle cx="897.6" cy="57.7" r="2.2" stroke="#0a3cff" stroke-width="1.5"/>
<circle cx="906.9" cy="55.6" r="2.2" stroke="#0a3cff" stroke-width="1.5"/>
<circle cx="916.2" cy="53.4" r="2.2" stroke="#0a3cff" stroke-width="1.5"/>
<circle cx="925.5" cy="51.1" r="2.2" stroke="#0a3cff" stroke-width="1.5"/>
<circle cx="934.8" cy="48.7" r="2.2" stroke="#0a3cff" stroke-width="1.5"/>
<circle cx="944.1" cy="46.4" r="2.2" stroke="#0a3cff" stroke-width="1.5"/>
<circle cx="953.4" cy="44.2" r="2.2" stroke="#0a3cff" stroke-width="1.5"/>
<circle cx="962.7" cy="42.1" r="2.2" stroke="#0a3cff" stroke-width="1.5"/>
<circle cx="972.0" cy="40.2" r="2.2" stroke="#0a3cff" stroke-width="1.5"/>
<circle cx="981.3" cy="38.8" r="2.2" stroke="#0a3cff" stroke-width="1.5"/>
<circle cx="990.6" cy="38.0" r="2.2" stroke="#0a3cff" stroke-width="1.5"/>
<circle cx="999.9" cy="38.0" r="2.2" stroke="#0a3cff" stroke-width="1.5"/>
<circle cx="1009.2" cy="39.3" r="2.2" stroke="#0a3cff" stroke-width="1.5"/>
<circle cx="1018.5" cy="42.4" r="2.2" stroke="#0a3cff" stroke-width="1.5"/>
<circle cx="1027.8" cy="48.3" r="2.2" stroke="#0a3cff" stroke-width="1.5"/>
<circle cx="1037.1" cy="58.3" r="2.2" stroke="#0a3cff" stroke-width="1.5"/>
<circle cx="1046.4" cy="74.5" r="2.2" stroke="#0a3cff" stroke-width="1.5"/>
<circle cx="1055.7" cy="99.0" r="2.2" stroke="#0a3cff" stroke-width="1.5"/>
<circle cx="1065.0" cy="130.6" r="2.2" stroke="#0a3cff" stroke-width="1.5"/>
<circle cx="1074.3" cy="162.3" r="2.2" stroke="#0a3cff" stroke-width="1.5"/>
<circle cx="1083.6" cy="187.4" r="2.2" stroke="#0a3cff" stroke-width="1.5"/>
<circle cx="1092.9" cy="204.6" r="2.2" stroke="#0a3cff" stroke-width="1.5"/>
<circle cx="1102.2" cy="216.0" r="2.2" stroke="#0a3cff" stroke-width="1.5"/>
<circle cx="1111.5" cy="223.5" r="2.2" stroke="#0a3cff" stroke-width="1.5"/>
<circle cx="1120.8" cy="228.6" r="2.2" stroke="#0a3cff" stroke-width="1.5"/>
<circle cx="1130.1" cy="232.1" r="2.2" stroke="#0a3cff" stroke-width="1.5"/>
<circle cx="1139.4" cy="234.5" r="2.2" stroke="#0a3cff" stroke-width="1.5"/>
<circle cx="1148.7" cy="236.2" r="2.2" stroke="#0a3cff" stroke-width="1.5"/>
<circle cx="1158.0" cy="237.5" r="2.2" stroke="#0a3cff" stroke-width="1.5"/>
<circle cx="1167.3" cy="238.4" r="2.2" stroke="#0a3cff" stroke-width="1.5"/>
<circle cx="1176.6" cy="239.0" r="2.2" stroke="#0a3cff" stroke-width="1.5"/>
<circle cx="1185.9" cy="239.4" r="2.2" stroke="#0a3cff" stroke-width="1.5"/>
<circle cx="1195.2" cy="239.7" r="2.2" stroke="#0a3cff" stroke-width="1.5"/>
<circle cx="1204.5" cy="239.9" r="2.2" stroke="#0a3cff" stroke-width="1.5"/>
<circle cx="1213.8" cy="240.1" r="2.2" stroke="#0a3cff" stroke-width="1.5"/>
<circle cx="1223.1" cy="240.2" r="2.2" stroke="#0a3cff" stroke-width="1.5"/>
<circle cx="1232.4" cy="240.2" r="2.2" stroke="#0a3cff" stroke-width="1.5"/>
<circle cx="1241.7" cy="240.2" r="2.2" stroke="#0a3cff" stroke-width="1.5"/>
<circle cx="1251.0" cy="240.1" r="2.2" stroke="#0a3cff" stroke-width="1.5"/>
<circle cx="1260.3" cy="240.1" r="2.2" stroke="#0a3cff" stroke-width="1.5"/>
<circle cx="1269.6" cy="240.0" r="2.2" stroke="#0a3cff" stroke-width="1.5"/>
<circle cx="1278.9" cy="239.9" r="2.2" stroke="#0a3cff" stroke-width="1.5"/>
<circle cx="1288.2" cy="239.7" r="2.2" stroke="#0a3cff" stroke-width="1.5"/>
<circle cx="1297.5" cy="239.6" r="2.2" stroke="#0a3cff" stroke-width="1.5"/>
<rect x="830.5" y="67.6" width="4" height="4" fill="#0a3cff"/>
<path d="M832.5 89.4 L841.8 89.9 L851.1 90.4 L860.4 91.0 L869.7 91.7 L879.0 92.4 L888.3 93.3 L897.6 94.2 L906.9 95.2 L916.2 96.4 L925.5 97.6 L934.8 99.1 L944.1 100.8 L953.4 102.7 L962.7 104.9 L972.0 107.5 L981.3 110.6 L990.6 114.4 L999.9 119.0 L1009.2 124.9 L1018.5 132.5 L1027.8 142.8 L1037.1 157.2 L1046.4 177.6 L1055.7 206.0 L1065.0 241.3 L1074.3 276.7 L1083.6 305.1 L1092.9 325.5 L1102.2 339.8 L1111.5 350.1 L1120.8 357.7 L1130.1 363.6 L1139.4 368.2 L1148.7 371.9 L1158.0 375.0 L1167.3 377.6 L1176.6 379.7 L1185.9 381.6 L1195.2 383.2 L1204.5 383.7 L1213.8 386.7 L1223.1 384.3 L1232.4 382.6 L1241.7 386.9 L1251.0 385.0 L1260.3 389.2 L1269.6 387.1 L1278.9 392.8 L1288.2 388.8 L1297.5 396.1" stroke="#00ff00" stroke-width="2.2" stroke-dasharray="0.1 4.65"/>
<circle cx="841.8" cy="89.9" r="2.2" stroke="#00ff00" stroke-width="1.5"/>
<circle cx="851.1" cy="90.4" r="2.2" stroke="#00ff00" stroke-width="1.5"/>
<circle cx="860.4" cy="91.0" r="2.2" stroke="#00ff00" stroke-width="1.5"/>
<circle cx="869.7" cy="91.7" r="2.2" stroke="#00ff00" stroke-width="1.5"/>
<circle cx="879.0" cy="92.4" r="2.2" stroke="#00ff00" stroke-width="1.5"/>
<circle cx="888.3" cy="93.3" r="2.2" stroke="#00ff00" stroke-width="1.5"/>
<circle cx="897.6" cy="94.2" r="2.2" stroke="#00ff00" stroke-width="1.5"/>
<circle cx="906.9" cy="95.2" r="2.2" stroke="#00ff00" stroke-width="1.5"/>
<circle cx="916.2" cy="96.4" r="2.2" stroke="#00ff00" stroke-width="1.5"/>
<circle cx="925.5" cy="97.6" r="2.2" stroke="#00ff00" stroke-width="1.5"/>
<circle cx="934.8" cy="99.1" r="2.2" stroke="#00ff00" stroke-width="1.5"/>
<circle cx="944.1" cy="100.8" r="2.2" stroke="#00ff00" stroke-width="1.5"/>
<circle cx="953.4" cy="102.7" r="2.2" stroke="#00ff00" stroke-width="1.5"/>
<circle cx="962.7" cy="104.9" r="2.2" stroke="#00ff00" stroke-width="1.5"/>
<circle cx="972.0" cy="107.5" r="2.2" stroke="#00ff00" stroke-width="1.5"/>
<circle cx="981.3" cy="110.6" r="2.2" stroke="#00ff00" stroke-width="1.5"/>
<circle cx="990.6" cy="114.4" r="2.2" stroke="#00ff00" stroke-width="1.5"/>
<circle cx="999.9" cy="119.0" r="2.2" stroke="#00ff00" stroke-width="1.5"/>
<circle cx="1009.2" cy="124.9" r="2.2" stroke="#00ff00" stroke-width="1.5"/>
<circle cx="1018.5" cy="132.5" r="2.2" stroke="#00ff00" stroke-width="1.5"/>
<circle cx="1027.8" cy="142.8" r="2.2" stroke="#00ff00" stroke-width="1.5"/>
<circle cx="1037.1" cy="157.2" r="2.2" stroke="#00ff00" stroke-width="1.5"/>
<circle cx="1046.4" cy="177.6" r="2.2" stroke="#00ff00" stroke-width="1.5"/>
<circle cx="1055.7" cy="206.0" r="2.2" stroke="#00ff00" stroke-width="1.5"/>
<circle cx="1065.0" cy="241.3" r="2.2" stroke="#00ff00" stroke-width="1.5"/>
<circle cx="1074.3" cy="276.7" r="2.2" stroke="#00ff00" stroke-width="1.5"/>
<circle cx="1083.6" cy="305.1" r="2.2" stroke="#00ff00" stroke-width="1.5"/>
<circle cx="1092.9" cy="325.5" r="2.2" stroke="#00ff00" stroke-width="1.5"/>
<circle cx="1102.2" cy="339.8" r="2.2" stroke="#00ff00" stroke-width="1.5"/>
<circle cx="1111.5" cy="350.1" r="2.2" stroke="#00ff00" stroke-width="1.5"/>
<circle cx="1120.8" cy="357.7" r="2.2" stroke="#00ff00" stroke-width="1.5"/>
<circle cx="1130.1" cy="363.6" r="2.2" stroke="#00ff00" stroke-width="1.5"/>
<circle cx="1139.4" cy="368.2" r="2.2" stroke="#00ff00" stroke-width="1.5"/>
<circle cx="1148.7" cy="371.9" r="2.2" stroke="#00ff00" stroke-width="1.5"/>
<circle cx="1158.0" cy="375.0" r="2.2" stroke="#00ff00" stroke-width="1.5"/>
<circle cx="1167.3" cy="377.6" r="2.2" stroke="#00ff00" stroke-width="1.5"/>
<circle cx="1176.6" cy="379.7" r="2.2" stroke="#00ff00" stroke-width="1.5"/>
<circle cx="1185.9" cy="381.6" r="2.2" stroke="#00ff00" stroke-width="1.5"/>
<circle cx="1195.2" cy="383.2" r="2.2" stroke="#00ff00" stroke-width="1.5"/>
<circle cx="1204.5" cy="383.7" r="2.2" stroke="#00ff00" stroke-width="1.5"/>
<circle cx="1213.8" cy="386.7" r="2.2" stroke="#00ff00" stroke-width="1.5"/>
<circle cx="1223.1" cy="384.3" r="2.2" stroke="#00ff00" stroke-width="1.5"/>
<circle cx="1232.4" cy="382.6" r="2.2" stroke="#00ff00" stroke-width="1.5"/>
<circle cx="1241.7" cy="386.9" r="2.2" stroke="#00ff00" stroke-width="1.5"/>
<circle cx="1251.0" cy="385.0" r="2.2" stroke="#00ff00" stroke-width="1.5"/>
<circle cx="1260.3" cy="389.2" r="2.2" stroke="#00ff00" stroke-width="1.5"/>
<circle cx="1269.6" cy="387.1" r="2.2" stroke="#00ff00" stroke-width="1.5"/>
<circle cx="1278.9" cy="392.8" r="2.2" stroke="#00ff00" stroke-width="1.5"/>
<circle cx="1288.2" cy="388.8" r="2.2" stroke="#00ff00" stroke-width="1.5"/>
<circle cx="1297.5" cy="396.1" r="2.2" stroke="#00ff00" stroke-width="1.5"/>
<rect x="830.5" y="87.4" width="4" height="4" fill="#00ff00"/>
<path d="M832.5 243.1 L841.8 242.7 L851.1 242.2 L860.4 241.7 L869.7 241.1 L879.0 240.3 L888.3 239.4 L897.6 238.3 L906.9 237.0 L916.2 235.5 L925.5 233.7 L934.8 231.6 L944.1 229.1 L953.4 226.2 L962.7 222.8 L972.0 218.9 L981.3 214.3 L990.6 209.0 L999.9 202.8 L1009.2 195.6 L1018.5 187.4 L1027.8 178.0 L1037.1 167.5 L1046.4 156.8 L1055.7 147.9 L1065.0 145.0 L1074.3 150.4 L1083.6 161.7 L1092.9 175.1 L1102.2 188.2 L1111.5 200.5 L1120.8 211.8 L1130.1 222.1 L1139.4 231.7 L1148.7 240.7 L1158.0 249.2 L1167.3 257.2 L1176.6 264.9 L1185.9 272.4 L1195.2 279.6 L1204.5 286.6 L1213.8 293.5 L1223.1 300.2 L1232.4 306.9 L1241.7 313.4 L1251.0 319.9 L1260.3 326.4 L1269.6 332.7 L1278.9 339.1 L1288.2 345.4 L1297.5 351.7" stroke="#0a3cff" stroke-width="3.2"/>
<path d="M832.5 90.7 L841.8 90.6 L851.1 90.5 L860.4 90.3 L869.7 90.1 L879.0 89.8 L888.3 89.5 L897.6 89.2 L906.9 88.7 L916.2 88.2 L925.5 87.6 L934.8 86.8 L944.1 85.8 L953.4 84.7 L962.7 83.3 L972.0 81.6 L981.3 79.6 L990.6 77.0 L999.9 73.9 L1009.2 70.1 L1018.5 65.5 L1027.8 60.0 L1037.1 53.7 L1046.4 47.4 L1055.7 43.2 L1065.0 45.1 L1074.3 55.5 L1083.6 72.0 L1092.9 90.6 L1102.2 109.2 L1111.5 127.0 L1120.8 143.9 L1130.1 160.0 L1139.4 175.4 L1148.7 190.2 L1158.0 204.5 L1167.3 218.5 L1176.6 232.2 L1185.9 245.6 L1195.2 258.9 L1204.5 271.9 L1213.8 284.9 L1223.1 297.7 L1232.4 310.4 L1241.7 323.1 L1251.0 335.7 L1260.3 348.2 L1269.6 360.7 L1278.9 373.2 L1288.2 385.6 L1297.5 398.0" stroke="#00ff00" stroke-width="3.2"/>
</g>
<text transform="translate(724.2 329.6) rotate(-90)" font-size="28" font-weight="bold" fill="#0a3cff" font-family="'Liberation Sans','DejaVu Sans',sans-serif" textLength="246" lengthAdjust="spacingAndGlyphs">TransferFunction43</text>
<text transform="translate(756.2 329.6) rotate(-90)" font-size="28" font-weight="bold" fill="#00ff00" font-family="'Liberation Sans','DejaVu Sans',sans-serif" textLength="246" lengthAdjust="spacingAndGlyphs">TransferFunction21</text>
<rect x="691.8" y="450.0" width="679.1" height="12.0" fill="#000" />
<rect x="689.3" y="450.0" width="2.6" height="12.0" fill="#9c9c9c" />
<path d="M690 435 H1371.3 V455 Q1371.3 461 1365.3 461 H696 Q690 461 690 455 Z" fill="#f0f0f0"/>
<rect x="690.0" y="434.8" width="681.3" height="2.2" fill="#fdfdfd" />
<text x="694.8" y="454.8" font-size="14" fill="#000" font-family="'Liberation Sans','DejaVu Sans',sans-serif" textLength="377.8" lengthAdjust="spacingAndGlyphs">Mouse Position: Frequency=24.9948Hz   23.6198dB,11.9271°</text>
<text x="1287.4" y="454.8" font-size="14" fill="#7d7d7d" font-family="'Liberation Sans','DejaVu Sans',sans-serif" textLength="26.5" lengthAdjust="spacingAndGlyphs">CAP</text>
<text x="1320.2" y="454.8" font-size="14" fill="#7d7d7d" font-family="'Liberation Sans','DejaVu Sans',sans-serif" textLength="28.0" lengthAdjust="spacingAndGlyphs">OVR</text>
<line x1="1315.6" y1="438.5" x2="1315.6" y2="459.5" stroke="#d9d9d9" stroke-width="1" />
<line x1="1349.3" y1="438.5" x2="1349.3" y2="459.5" stroke="#d9d9d9" stroke-width="1" />
<rect x="1366.3" y="448.3" width="2.4" height="2.4" fill="#bdbdbd" />
<rect x="1362.3" y="452.3" width="2.4" height="2.4" fill="#bdbdbd" />
<rect x="1366.3" y="452.3" width="2.4" height="2.4" fill="#bdbdbd" />
<rect x="1358.3" y="456.3" width="2.4" height="2.4" fill="#bdbdbd" />
<rect x="1362.3" y="456.3" width="2.4" height="2.4" fill="#bdbdbd" />
<rect x="1366.3" y="456.3" width="2.4" height="2.4" fill="#bdbdbd" />
<rect x="689.3" y="461.0" width="2.6" height="334.0" fill="#9c9c9c" />
<rect x="691.8" y="461.4" width="679.1" height="333.3" fill="#000" />
<rect x="690.0" y="794.7" width="683.0" height="2.3" fill="#ffffff" />
<line x1="809.0" y1="476.2" x2="1277.4" y2="476.2" stroke="#d2d2d2" stroke-width="2.7" />
<line x1="809.0" y1="606.0" x2="1275.5" y2="606.0" stroke="#d2d2d2" stroke-width="2.7" />
<line x1="820.5" y1="476.2" x2="820.5" y2="606.0" stroke="#d2d2d2" stroke-width="2.7" />
<line x1="1264.4" y1="476.2" x2="1264.4" y2="606.0" stroke="#d2d2d2" stroke-width="2.7" />
<text x="806.6" y="482.8" font-size="18.2" fill="#e4e4e4" font-family="'Liberation Sans','DejaVu Sans',sans-serif" text-anchor="end" textLength="20.4" lengthAdjust="spacingAndGlyphs">0V</text>
<line x1="809.0" y1="519.5" x2="820.5" y2="519.5" stroke="#d2d2d2" stroke-width="2.7" />
<text x="806.6" y="526.1" font-size="18.2" fill="#e4e4e4" font-family="'Liberation Sans','DejaVu Sans',sans-serif" text-anchor="end" textLength="38.2" lengthAdjust="spacingAndGlyphs">-60V</text>
<line x1="809.0" y1="562.7" x2="820.5" y2="562.7" stroke="#d2d2d2" stroke-width="2.7" />
<text x="806.6" y="569.3" font-size="18.2" fill="#e4e4e4" font-family="'Liberation Sans','DejaVu Sans',sans-serif" text-anchor="end" textLength="49.4" lengthAdjust="spacingAndGlyphs">-120V</text>
<text x="806.6" y="612.6" font-size="18.2" fill="#e4e4e4" font-family="'Liberation Sans','DejaVu Sans',sans-serif" text-anchor="end" textLength="49.4" lengthAdjust="spacingAndGlyphs">-180V</text>
<text x="1304.6" y="482.8" font-size="18.2" fill="#e4e4e4" font-family="'Liberation Sans','DejaVu Sans',sans-serif" text-anchor="end" textLength="20.6" lengthAdjust="spacingAndGlyphs">30</text>
<line x1="1264.4" y1="541.1" x2="1277.4" y2="541.1" stroke="#d2d2d2" stroke-width="2.7" />
<text x="1304.6" y="547.7" font-size="18.2" fill="#e4e4e4" font-family="'Liberation Sans','DejaVu Sans',sans-serif" text-anchor="end" textLength="10.2" lengthAdjust="spacingAndGlyphs">5</text>
<text x="1304.6" y="612.6" font-size="18.2" fill="#e4e4e4" font-family="'Liberation Sans','DejaVu Sans',sans-serif" text-anchor="end" textLength="27.6" lengthAdjust="spacingAndGlyphs">-20</text>
<line x1="809.0" y1="630.6" x2="1277.4" y2="630.6" stroke="#d2d2d2" stroke-width="2.7" />
<line x1="809.0" y1="759.3" x2="1275.5" y2="759.3" stroke="#d2d2d2" stroke-width="2.7" />
<line x1="820.5" y1="630.6" x2="820.5" y2="759.3" stroke="#d2d2d2" stroke-width="2.7" />
<line x1="1264.4" y1="630.6" x2="1264.4" y2="759.3" stroke="#d2d2d2" stroke-width="2.7" />
<text x="806.6" y="637.2" font-size="18.2" fill="#e4e4e4" font-family="'Liberation Sans','DejaVu Sans',sans-serif" text-anchor="end" textLength="31.0" lengthAdjust="spacingAndGlyphs">40V</text>
<line x1="809.0" y1="662.8" x2="820.5" y2="662.8" stroke="#d2d2d2" stroke-width="2.7" />
<text x="806.6" y="669.4" font-size="18.2" fill="#e4e4e4" font-family="'Liberation Sans','DejaVu Sans',sans-serif" text-anchor="end" textLength="20.4" lengthAdjust="spacingAndGlyphs">5V</text>
<line x1="809.0" y1="695.0" x2="820.5" y2="695.0" stroke="#d2d2d2" stroke-width="2.7" />
<text x="806.6" y="701.6" font-size="18.2" fill="#e4e4e4" font-family="'Liberation Sans','DejaVu Sans',sans-serif" text-anchor="end" textLength="38.2" lengthAdjust="spacingAndGlyphs">-30V</text>
<line x1="809.0" y1="727.1" x2="820.5" y2="727.1" stroke="#d2d2d2" stroke-width="2.7" />
<text x="806.6" y="733.7" font-size="18.2" fill="#e4e4e4" font-family="'Liberation Sans','DejaVu Sans',sans-serif" text-anchor="end" textLength="38.2" lengthAdjust="spacingAndGlyphs">-65V</text>
<text x="806.6" y="765.9" font-size="18.2" fill="#e4e4e4" font-family="'Liberation Sans','DejaVu Sans',sans-serif" text-anchor="end" textLength="49.4" lengthAdjust="spacingAndGlyphs">-100V</text>
<text x="1304.6" y="637.2" font-size="18.2" fill="#e4e4e4" font-family="'Liberation Sans','DejaVu Sans',sans-serif" text-anchor="end" textLength="20.6" lengthAdjust="spacingAndGlyphs">14</text>
<line x1="1264.4" y1="662.8" x2="1277.4" y2="662.8" stroke="#d2d2d2" stroke-width="2.7" />
<text x="1304.6" y="669.4" font-size="18.2" fill="#e4e4e4" font-family="'Liberation Sans','DejaVu Sans',sans-serif" text-anchor="end" textLength="10.2" lengthAdjust="spacingAndGlyphs">7</text>
<line x1="1264.4" y1="695.0" x2="1277.4" y2="695.0" stroke="#d2d2d2" stroke-width="2.7" />
<text x="1304.6" y="701.6" font-size="18.2" fill="#e4e4e4" font-family="'Liberation Sans','DejaVu Sans',sans-serif" text-anchor="end" textLength="10.2" lengthAdjust="spacingAndGlyphs">0</text>
<line x1="1264.4" y1="727.1" x2="1277.4" y2="727.1" stroke="#d2d2d2" stroke-width="2.7" />
<text x="1304.6" y="733.7" font-size="18.2" fill="#e4e4e4" font-family="'Liberation Sans','DejaVu Sans',sans-serif" text-anchor="end" textLength="17.0" lengthAdjust="spacingAndGlyphs">-7</text>
<text x="1304.6" y="765.9" font-size="18.2" fill="#e4e4e4" font-family="'Liberation Sans','DejaVu Sans',sans-serif" text-anchor="end" textLength="27.6" lengthAdjust="spacingAndGlyphs">-14</text>
<line x1="820.5" y1="759.3" x2="820.5" y2="767.0" stroke="#d2d2d2" stroke-width="2.7" />
<text x="820.5" y="787.0" font-size="18.2" fill="#e4e4e4" font-family="'Liberation Sans','DejaVu Sans',sans-serif" text-anchor="middle" textLength="36.6" lengthAdjust="spacingAndGlyphs">0ms</text>
<line x1="894.8" y1="759.3" x2="894.8" y2="767.0" stroke="#d2d2d2" stroke-width="2.7" />
<text x="894.8" y="787.0" font-size="18.2" fill="#e4e4e4" font-family="'Liberation Sans','DejaVu Sans',sans-serif" text-anchor="middle" textLength="47.0" lengthAdjust="spacingAndGlyphs">50ms</text>
<line x1="969.1" y1="759.3" x2="969.1" y2="767.0" stroke="#d2d2d2" stroke-width="2.7" />
<text x="969.1" y="787.0" font-size="18.2" fill="#e4e4e4" font-family="'Liberation Sans','DejaVu Sans',sans-serif" text-anchor="middle" textLength="58.5" lengthAdjust="spacingAndGlyphs">100ms</text>
<line x1="1043.4" y1="759.3" x2="1043.4" y2="767.0" stroke="#d2d2d2" stroke-width="2.7" />
<text x="1043.4" y="787.0" font-size="18.2" fill="#e4e4e4" font-family="'Liberation Sans','DejaVu Sans',sans-serif" text-anchor="middle" textLength="58.5" lengthAdjust="spacingAndGlyphs">150ms</text>
<line x1="1117.7" y1="759.3" x2="1117.7" y2="767.0" stroke="#d2d2d2" stroke-width="2.7" />
<text x="1117.7" y="787.0" font-size="18.2" fill="#e4e4e4" font-family="'Liberation Sans','DejaVu Sans',sans-serif" text-anchor="middle" textLength="58.5" lengthAdjust="spacingAndGlyphs">200ms</text>
<line x1="1192.0" y1="759.3" x2="1192.0" y2="767.0" stroke="#d2d2d2" stroke-width="2.7" />
<text x="1192.0" y="787.0" font-size="18.2" fill="#e4e4e4" font-family="'Liberation Sans','DejaVu Sans',sans-serif" text-anchor="middle" textLength="58.5" lengthAdjust="spacingAndGlyphs">250ms</text>
<g fill="none" stroke-linejoin="round" stroke-width="2.6">
<path d="M820.5 476.2 L877.6 476.2 L879.9 478.3 L906.0 478.3 L907.0 478.5 L930.7 478.5 L931.8 478.7 L953.3 478.7 L954.3 479.0 L973.8 479.0 L974.9 479.2 L992.6 479.2 L993.6 479.6 L1009.7 479.6 L1010.7 479.9 L1025.3 479.9 L1026.3 480.3 L1039.5 480.3 L1040.5 480.7 L1052.5 480.7 L1053.5 481.2 L1064.3 481.2 L1065.4 481.7 L1075.1 481.7 L1076.1 482.3 L1084.9 482.3 L1086.0 483.0 L1093.9 483.0 L1095.0 483.8 L1102.1 483.8 L1103.1 484.7 L1109.6 484.7 L1110.6 485.8 L1116.4 485.8 L1117.4 487.1 L1122.6 487.1 L1123.6 488.6 L1130.8 488.6 L1131.8 490.6 L1138.9 490.6 L1140.0 493.0 L1147.3 493.0 L1148.3 496.1 L1153.8 496.1 L1154.8 500.4 L1159.5 500.4 L1160.5 506.3 L1163.3 506.3 L1164.4 514.8 L1167.9 514.8 L1169.0 526.5 L1172.7 526.5 L1173.7 541.1 L1180.3 541.1 L1181.3 555.7 L1186.8 555.7 L1187.8 567.4 L1190.5 567.4 L1191.6 575.9 L1195.3 575.9 L1196.3 581.8 L1200.9 581.8 L1201.9 586.1 L1205.8 586.1 L1206.9 589.2 L1210.1 589.2 L1211.1 591.6 L1214.0 591.6 L1215.1 593.6 L1217.1 593.6 L1218.2 595.1 L1219.6 595.1 L1220.7 596.4 L1222.1 596.4 L1223.2 597.5 L1224.5 597.5 L1225.5 598.4 L1226.6 598.4 L1227.6 599.2 L1228.7 599.2 L1229.7 599.9 L1230.8 599.9 L1231.8 600.5 L1232.9 600.5 L1233.9 601.0 L1235.0 601.0 L1236.0 601.5 L1237.1 601.5 L1238.2 601.9 L1239.2 601.9 L1240.2 602.3 L1240.9 602.3 L1241.9 602.6 L1242.6 602.6 L1243.6 603.0 L1244.3 603.0 L1245.3 603.2 L1245.9 603.2 L1247.0 603.5 L1247.4 603.5 L1248.5 603.7 L1248.9 603.7 L1250.0 603.9 L1250.0 603.9" stroke="#008000"/>
<path d="M879.9 607.0 L879.9 502.0 L906.0 502.0 L907.0 501.9 L930.7 501.9 L931.8 501.9 L953.3 501.9 L954.3 501.8 L973.8 501.8 L974.9 501.7 L992.6 501.7 L993.6 501.7 L1009.7 501.7 L1010.7 501.6 L1025.3 501.6 L1026.3 501.4 L1039.5 501.4 L1040.5 501.3 L1052.5 501.3 L1053.5 501.1 L1064.3 501.1 L1065.4 500.9 L1075.1 500.9 L1076.1 500.6 L1084.9 500.6 L1086.0 500.3 L1093.9 500.3 L1095.0 499.9 L1102.1 499.9 L1103.1 499.5 L1109.6 499.5 L1110.6 498.9 L1116.4 498.9 L1117.4 498.2 L1122.6 498.2 L1123.6 497.3 L1130.8 497.3 L1131.8 496.3 L1138.9 496.3 L1140.0 495.0 L1147.3 495.0 L1148.3 493.4 L1153.8 493.4 L1154.8 491.6 L1159.5 491.6 L1160.5 489.5 L1163.3 489.5 L1164.4 487.3 L1167.9 487.3 L1169.0 485.9 L1172.7 485.9 L1173.7 486.5 L1180.3 486.5 L1181.3 490.0 L1186.8 490.0 L1187.8 495.6 L1190.5 495.6 L1191.6 501.9 L1195.3 501.9 L1196.3 508.2 L1200.9 508.2 L1201.9 514.2 L1205.8 514.2 L1206.9 519.9 L1210.1 519.9 L1211.1 525.4 L1214.0 525.4 L1215.1 530.6 L1217.1 530.6 L1218.2 535.6 L1219.6 535.6 L1220.7 540.4 L1222.1 540.4 L1223.2 545.1 L1224.5 545.1 L1225.5 549.8 L1226.6 549.8 L1227.6 554.3 L1228.7 554.3 L1229.7 558.8 L1230.8 558.8 L1231.8 563.2 L1232.9 563.2 L1233.9 567.6 L1235.0 567.6 L1236.0 571.9 L1237.1 571.9 L1238.2 576.2 L1239.2 576.2 L1240.2 580.5 L1240.9 580.5 L1241.9 584.7 L1242.6 584.7 L1243.6 589.0 L1244.3 589.0 L1245.3 593.2 L1245.9 593.2 L1247.0 597.4 L1247.4 597.4 L1248.5 601.6 L1248.9 601.6 L1250.0 605.8 L1250.0 605.8" stroke="#ff4500"/>
<path d="M820.5 667.4 L877.6 667.4 L879.9 659.6 L906.0 659.6 L907.0 658.9 L930.7 658.9 L931.8 658.2 L953.3 658.2 L954.3 657.3 L973.8 657.3 L974.9 656.4 L992.6 656.4 L993.6 655.5 L1009.7 655.5 L1010.7 654.5 L1025.3 654.5 L1026.3 653.4 L1039.5 653.4 L1040.5 652.3 L1052.5 652.3 L1053.5 651.1 L1064.3 651.1 L1065.4 649.9 L1075.1 649.9 L1076.1 648.6 L1084.9 648.6 L1086.0 647.4 L1093.9 647.4 L1095.0 646.2 L1102.1 646.2 L1103.1 645.1 L1109.6 645.1 L1110.6 644.2 L1116.4 644.2 L1117.4 643.4 L1122.6 643.4 L1123.6 643.0 L1130.8 643.0 L1131.8 643.0 L1138.9 643.0 L1140.0 643.7 L1147.3 643.7 L1148.3 645.4 L1153.8 645.4 L1154.8 648.5 L1159.5 648.5 L1160.5 653.7 L1163.3 653.7 L1164.4 662.3 L1167.9 662.3 L1169.0 675.2 L1172.7 675.2 L1173.7 691.8 L1180.3 691.8 L1181.3 708.5 L1186.8 708.5 L1187.8 721.7 L1190.5 721.7 L1191.6 730.8 L1195.3 730.8 L1196.3 736.8 L1200.9 736.8 L1201.9 740.8 L1205.8 740.8 L1206.9 743.5 L1210.1 743.5 L1211.1 745.3 L1214.0 745.3 L1215.1 746.6 L1217.1 746.6 L1218.2 747.6 L1219.6 747.6 L1220.7 748.2 L1222.1 748.2 L1223.2 748.7 L1224.5 748.7 L1225.5 749.1 L1226.6 749.1 L1227.6 749.3 L1228.7 749.3 L1229.7 749.5 L1230.8 749.5 L1231.8 749.7 L1232.9 749.7 L1233.9 749.8 L1235.0 749.8 L1236.0 749.9 L1237.1 749.9 L1238.2 749.9 L1239.2 749.9 L1240.2 750.0 L1240.9 750.0 L1241.9 750.0 L1242.6 750.0 L1243.6 750.0 L1244.3 750.0 L1245.3 750.0 L1245.9 750.0 L1247.0 750.1 L1247.4 750.1 L1248.5 750.1 L1248.9 750.1 L1250.0 750.1 L1250.0 750.1" stroke="#0a3cff"/>
<path d="M879.9 760.3 L879.9 693.8 L906.0 693.8 L907.0 693.6 L930.7 693.6 L931.8 693.3 L953.3 693.3 L954.3 693.0 L973.8 693.0 L974.9 692.6 L992.6 692.6 L993.6 692.2 L1009.7 692.2 L1010.7 691.6 L1025.3 691.6 L1026.3 691.0 L1039.5 691.0 L1040.5 690.2 L1052.5 690.2 L1053.5 689.3 L1064.3 689.3 L1065.4 688.2 L1075.1 688.2 L1076.1 686.9 L1084.9 686.9 L1086.0 685.5 L1093.9 685.5 L1095.0 683.7 L1102.1 683.7 L1103.1 681.7 L1109.6 681.7 L1110.6 679.3 L1116.4 679.3 L1117.4 676.6 L1122.6 676.6 L1123.6 673.4 L1130.8 673.4 L1131.8 669.7 L1138.9 669.7 L1140.0 665.4 L1147.3 665.4 L1148.3 660.5 L1153.8 660.5 L1154.8 654.9 L1159.5 654.9 L1160.5 648.6 L1163.3 648.6 L1164.4 642.2 L1167.9 642.2 L1169.0 636.9 L1172.7 636.9 L1173.7 635.1 L1180.3 635.1 L1181.3 638.4 L1186.8 638.4 L1187.8 645.2 L1190.5 645.2 L1191.6 653.1 L1195.3 653.1 L1196.3 661.0 L1200.9 661.0 L1201.9 668.3 L1205.8 668.3 L1206.9 675.1 L1210.1 675.1 L1211.1 681.3 L1214.0 681.3 L1215.1 687.0 L1217.1 687.0 L1218.2 692.4 L1219.6 692.4 L1220.7 697.5 L1222.1 697.5 L1223.2 702.3 L1224.5 702.3 L1225.5 706.9 L1226.6 706.9 L1227.6 711.4 L1228.7 711.4 L1229.7 715.7 L1230.8 715.7 L1231.8 719.9 L1232.9 719.9 L1233.9 724.0 L1235.0 724.0 L1236.0 728.0 L1237.1 728.0 L1238.2 732.0 L1239.2 732.0 L1240.2 735.9 L1240.9 735.9 L1241.9 739.8 L1242.6 739.8 L1243.6 743.7 L1244.3 743.7 L1245.3 747.5 L1245.9 747.5 L1247.0 751.3 L1247.4 751.3 L1248.5 755.0 L1248.9 755.0 L1250.0 758.8 L1250.0 758.8" stroke="#00ff00"/>
</g>
<text transform="translate(744.2 582.5) rotate(-90)" font-size="26.6" font-weight="bold" fill="#008000" font-family="'Liberation Sans','DejaVu Sans',sans-serif" textLength="83.5" lengthAdjust="spacingAndGlyphs">Ph21()</text>
<text transform="translate(1316.5 469.3) rotate(90)" font-size="26.6" font-weight="bold" fill="#ff4500" font-family="'Liberation Sans','DejaVu Sans',sans-serif" textLength="142.6" lengthAdjust="spacingAndGlyphs">Gain21dB()</text>
<text transform="translate(744.4 736.3) rotate(-90)" font-size="26.6" font-weight="bold" fill="#0a3cff" font-family="'Liberation Sans','DejaVu Sans',sans-serif" textLength="83" lengthAdjust="spacingAndGlyphs">Ph43()</text>
<text transform="translate(1316.5 624.1) rotate(90)" font-size="26.6" font-weight="bold" fill="#00ff00" font-family="'Liberation Sans','DejaVu Sans',sans-serif" textLength="142.8" lengthAdjust="spacingAndGlyphs">Gain43dB()</text>
<rect x="0.0" y="623.3" width="690.0" height="4.9" fill="#e8eaf8" />
<rect x="3.0" y="628.0" width="686.5" height="29.0" fill="url(#hdr)" />
<text x="7.1" y="647.2" font-size="14.6" fill="#1a1a1a" font-family="'Liberation Sans','DejaVu Sans',sans-serif" textLength="98.7" lengthAdjust="spacingAndGlyphs">Output Window</text>
<path d="M655.2 640.2 H666.2 L660.7 645.8 Z" fill="#1a1a1a"/>
<path d="M674.6 638 L683.2 646.6 M683.2 638 L674.6 646.6" stroke="#1a1a1a" stroke-width="2" fill="none"/>
<rect x="3.5" y="657.5" width="686" height="109" fill="#efefef" stroke="#8c8c8c" stroke-width="1"/>
<rect x="4.5" y="658.5" width="662.5" height="86.5" fill="#f3f3f3" />
<path d="M4.5 745.4 H667 V658.5" fill="none" stroke="#fbfbfb" stroke-width="1"/>
<clipPath id="tclip"><rect x="5" y="659" width="661.3" height="86"/></clipPath>
<g clip-path="url(#tclip)">
<text x="15.8" y="678.6" font-size="18.6" fill="#000" font-family="'Liberation Mono','DejaVu Sans Mono',monospace" font-weight="bold" textLength="36.0" lengthAdjust="spacingAndGlyphs">X1:</text>
<text x="15.8" y="698.7" font-size="18.6" fill="#000" font-family="'Liberation Mono','DejaVu Sans Mono',monospace" font-weight="bold" textLength="708.0" lengthAdjust="spacingAndGlyphs">X1: PostProcess : C:\PROGRA~1\QSPICE\QUX.exe franalyzer.exe</text>
<text x="15.8" y="718.8" font-size="18.6" fill="#000" font-family="'Liberation Mono','DejaVu Sans Mono',monospace" font-weight="bold" textLength="360.0" lengthAdjust="spacingAndGlyphs">X1: Press Abort to continue...</text>
</g>
<line x1="27.0" y1="755.4" x2="212.8" y2="755.4" stroke="#868686" stroke-width="3" stroke-linecap="round"/>
<line x1="676.8" y1="703.5" x2="676.8" y2="723.2" stroke="#868686" stroke-width="3" stroke-linecap="round"/>
<rect x="3.0" y="767.0" width="687.0" height="28.6" fill="#f0f0f0" />
<rect x="0.0" y="795.6" width="690.0" height="1.4" fill="#d4d4d4" />
<path d="M78.7 766.5 L92.2 792.4 H163 L176 766.5 Z" fill="#ffffff"/>
<path d="M78.7 766.8 L92.2 792.4 H163 L169.6 779.3" fill="none" stroke="#3c3c3c" stroke-width="1"/>
<path d="M176.2 767 L169.6 779.3 L176 792.4 H260 L271.6 767" fill="none" stroke="#3c3c3c" stroke-width="1"/>
<text x="91.3" y="783.7" font-size="14.2" fill="#000" font-family="'Liberation Sans','DejaVu Sans',sans-serif" font-weight="bold" textLength="70.6" lengthAdjust="spacingAndGlyphs">Simulation</text>
<text x="179.7" y="783.7" font-size="14.2" fill="#1a1a1a" font-family="'Liberation Sans','DejaVu Sans',sans-serif" textLength="74.7" lengthAdjust="spacingAndGlyphs">Post Process</text>
<rect x="8.7" y="775.8" width="1.8" height="9.2" fill="#2a2a2a" />
<path d="M17 775.8 L11.4 780.4 L17 785 Z" fill="#2a2a2a"/>
<path d="M33.6 775.8 L28 780.4 L33.6 785 Z" fill="#2a2a2a"/>
<path d="M47.6 775.8 L53.2 780.4 L47.6 785 Z" fill="#2a2a2a"/>
<path d="M64.2 775.8 L69.8 780.4 L64.2 785 Z" fill="#2a2a2a"/>
<rect x="70.2" y="775.8" width="1.8" height="9.2" fill="#2a2a2a" />
<rect x="628.0" y="4.0" width="60.4" height="793.0" fill="url(#shadow)" />
</svg>
</body></html>
